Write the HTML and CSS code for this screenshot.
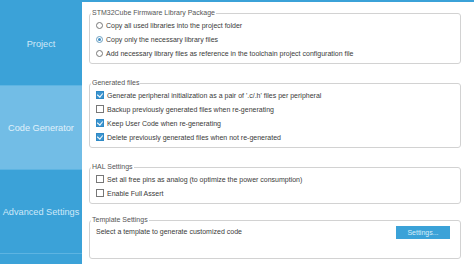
FILE: index.html
```html
<!DOCTYPE html>
<html lang="en">
<head>
  <meta charset="UTF-8">
  <title>Project Settings</title>
  <link rel="stylesheet" href="styles.css">
</head>
<body>
  <div class="window">
    <!-- tabs on the left -->
    <div class="sidebar">
      <div class="tab">Project</div>
      <div class="tab active">Code Generator</div>
      <div class="tab">Advanced Settings</div>
      <div class="tab rest"></div>
    </div>

    <div class="content">
      <fieldset>
        <legend>STM32Cube Firmware Library Package</legend>
        <label class="row"><span class="radio"></span>Copy all used libraries into the project folder</label>
        <label class="row"><span class="radio on"></span>Copy only the necessary library files</label>
        <label class="row"><span class="radio"></span>Add necessary library files as reference in the toolchain project configuration file</label>
      </fieldset>

      <fieldset>
        <legend>Generated files</legend>
        <label class="row"><span class="check on"></span>Generate peripheral initialization as a pair of '.c/.h' files per peripheral</label>
        <label class="row"><span class="check"></span>Backup previously generated files when re-generating</label>
        <label class="row"><span class="check on"></span>Keep User Code when re-generating</label>
        <label class="row"><span class="check on"></span>Delete previously generated files when not re-generated</label>
      </fieldset>

      <fieldset class="hal">
        <legend>HAL Settings</legend>
        <label class="row"><span class="check"></span>Set all free pins as analog (to optimize the power consumption)</label>
        <label class="row"><span class="check"></span>Enable Full Assert</label>
      </fieldset>

      <fieldset class="template">
        <legend>Template Settings</legend>
        <div class="template-row">
          <span class="plain">Select a template to generate customized code</span>
          <button>Settings...</button>
        </div>
      </fieldset>
    </div>
  </div>
</body>
</html>
```

FILE: styles.css
```css
body {
  margin: 0;
  font-family: "Liberation Sans", Arial, sans-serif;
  background-color: #fff;
}
.window {
  display: flex;
  height: 264px;
  border-top: 2px solid #3ba2d8;
  box-sizing: border-box;
}
.sidebar {
  width: 82px;
  display: flex;
  flex-direction: column;
  background-color: #3ba2d8;
}
.tab {
  height: 83px;
  display: flex;
  align-items: center;
  justify-content: center;
  color: #cfe9f8;
  font-size: 9.2px;
  border-bottom: 1px solid #5db4e2;
}
.tab.active {
  background-color: #72bde6;
  color: #e0f1fb;
}
.tab.rest {
  flex: 1;
  border-bottom: none;
}
.content {
  flex: 1;
  padding: 6px 13px 0 7px;
}
fieldset {
  margin: 0 0 14px 0;
  padding: 0 6px 3px 6px;
  border: 1px solid #d2d2d2;
  border-radius: 3px;
}
fieldset.hal {
  margin-bottom: 11px;
}
legend {
  font-size: 7px;
  line-height: 10px;
  color: #555;
  padding: 0 1px;
  margin-left: -5px;
}
.row {
  display: flex;
  align-items: center;
  height: 14px;
  font-size: 7px;
  color: #3a3a3a;
}
.radio {
  width: 7px;
  height: 7px;
  border: 1px solid #777;
  border-radius: 50%;
  margin-right: 3px;
  box-sizing: border-box;
  display: flex;
  align-items: center;
  justify-content: center;
}
.radio.on {
  border-color: #6a9ec0;
}
.radio.on::after {
  content: "";
  width: 3px;
  height: 3px;
  border-radius: 50%;
  background-color: #3c8cc4;
}
.check {
  width: 8px;
  height: 8px;
  border: 1px solid #777;
  margin-right: 3px;
  box-sizing: border-box;
  position: relative;
}
.check.on {
  border-color: #2f89c5;
  background-color: #3c95d0;
}
.check.on::after {
  content: "";
  position: absolute;
  left: 1px;
  top: 0px;
  width: 3px;
  height: 4px;
  border: solid #fff;
  border-width: 0 1px 1px 0;
  transform: rotate(40deg);
}
.template-row {
  display: flex;
  align-items: flex-start;
  justify-content: space-between;
  height: 30px;
}
.plain {
  font-size: 7px;
  color: #3a3a3a;
  line-height: 14px;
}
button {
  width: 54px;
  height: 13px;
  margin-top: 1px;
  margin-right: 4px;
  padding: 0;
  font-family: "Liberation Sans", Arial, sans-serif;
  font-size: 7px;
  color: #d8eefa;
  background-color: #3ba2d8;
  border: none;
}
```
